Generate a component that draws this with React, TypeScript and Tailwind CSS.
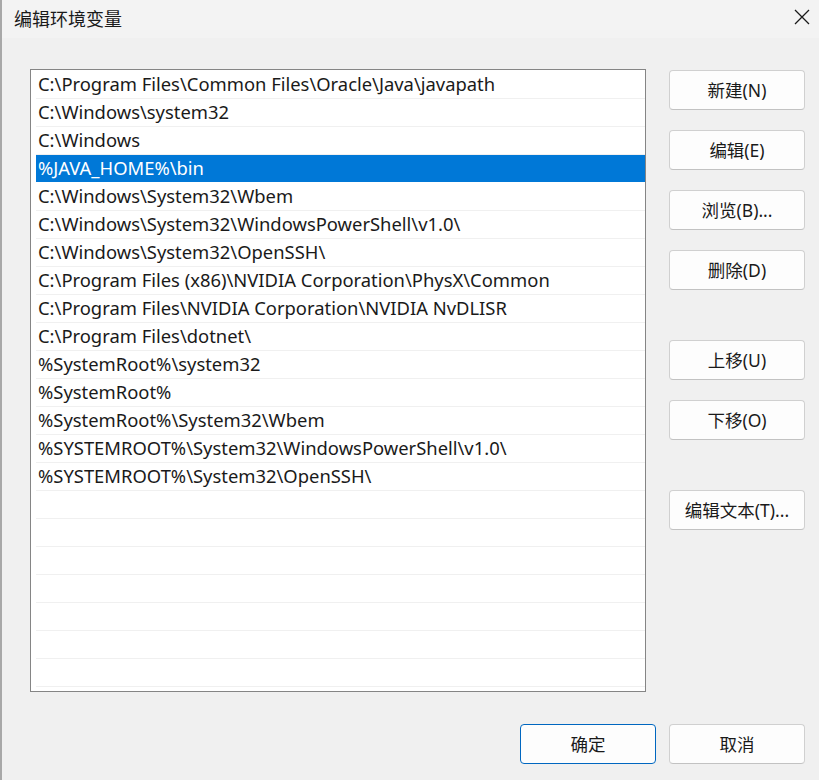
import React from 'react';

const paths = [
  'C:\\Program Files\\Common Files\\Oracle\\Java\\javapath',
  'C:\\Windows\\system32',
  'C:\\Windows',
  '%JAVA_HOME%\\bin',
  'C:\\Windows\\System32\\Wbem',
  'C:\\Windows\\System32\\WindowsPowerShell\\v1.0\\',
  'C:\\Windows\\System32\\OpenSSH\\',
  'C:\\Program Files (x86)\\NVIDIA Corporation\\PhysX\\Common',
  'C:\\Program Files\\NVIDIA Corporation\\NVIDIA NvDLISR',
  'C:\\Program Files\\dotnet\\',
  '%SystemRoot%\\system32',
  '%SystemRoot%',
  '%SystemRoot%\\System32\\Wbem',
  '%SYSTEMROOT%\\System32\\WindowsPowerShell\\v1.0\\',
  '%SYSTEMROOT%\\System32\\OpenSSH\\',
];

const SELECTED = 3;
const TOTAL_ROWS = 23;

function Button({ label, primary }: { label: string; primary?: boolean }) {
  return (
    <button
      className={
        primary
          ? 'flex h-10 w-[136px] items-center justify-center rounded-[4px] border border-[#0067c0] bg-[#fdfdfd] text-[17.5px] text-[#1a1a1a]'
          : 'flex h-10 w-[136px] items-center justify-center rounded-[4px] border border-[#d0d0d0] border-b-[#c2c2c2] bg-[#fdfdfd] text-[17.5px] text-[#1a1a1a]'
      }
    >
      {label}
    </button>
  );
}

export default function App() {
  const rows = Array.from({ length: TOTAL_ROWS }).map((_, i) => paths[i] ?? '');

  return (
    <div
      className="flex h-[780px] w-[819px] overflow-hidden bg-[#f0f0f0]"
      style={{ fontFamily: '"Noto Sans", "Noto Sans CJK SC", sans-serif' }}
    >
      {/* sliver of the window behind */}
      <div className="w-[2px] shrink-0 bg-[#a8a8a8]" />

      <div className="flex min-w-0 flex-1 flex-col">
        <div className="flex h-[38px] shrink-0 items-center justify-between bg-[#f3f3f3] pl-[12px] pr-[8px]">
          <span className="text-[18px] text-[#1a1a1a]">编辑环境变量</span>
          <svg width="16" height="16" viewBox="0 0 16 16" className="mr-[1px] mt-[-4px]">
            <path d="M1 1L15 15M15 1L1 15" stroke="#1a1a1a" strokeWidth="1.3" fill="none" />
          </svg>
        </div>

        <div className="flex pl-[28px] pt-[31px]">
          <div className="h-[623px] w-[616px] overflow-hidden border border-[#858585] bg-white pl-[5px] pt-[1px]">
            {rows.map((text, i) => (
              <div
                key={`row-${i}`}
                className={
                  i === SELECTED
                    ? 'flex h-[28px] items-center border-b border-white bg-[#0078d7] pl-[2px] text-[18.4px] leading-none text-white'
                    : 'flex h-[28px] items-center border-b border-[#f0f0f0] pl-[2px] text-[18.4px] leading-none text-[#1a1a1a]'
                }
              >
                <span className="whitespace-pre">{text}</span>
              </div>
            ))}
          </div>

          <div className="ml-[23px] flex flex-col pt-[1px]">
            <div className="flex flex-col gap-[20px]">
              <Button label="新建(N)" />
              <Button label="编辑(E)" />
              <Button label="浏览(B)..." />
              <Button label="删除(D)" />
            </div>
            <div className="mt-[50px] flex flex-col gap-[20px]">
              <Button label="上移(U)" />
              <Button label="下移(O)" />
            </div>
            <div className="mt-[50px]">
              <Button label="编辑文本(T)..." />
            </div>
          </div>
        </div>

        <div className="flex justify-end gap-[13px] pr-[14px] pt-[32px]">
          <Button label="确定" primary />
          <Button label="取消" />
        </div>
      </div>
    </div>
  );
}
